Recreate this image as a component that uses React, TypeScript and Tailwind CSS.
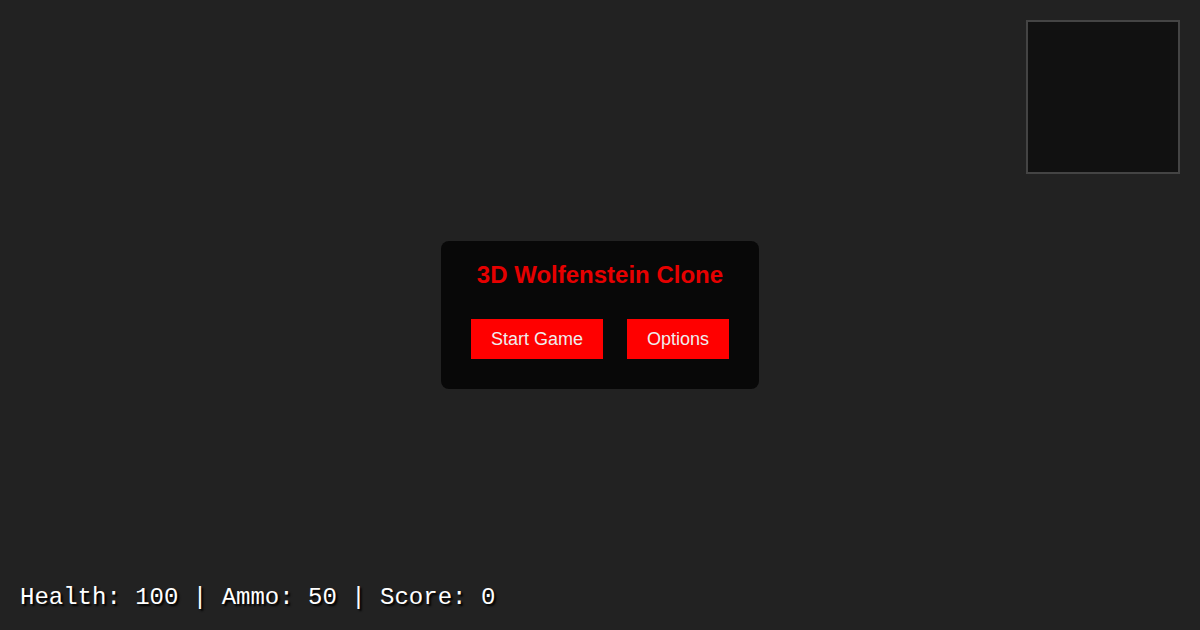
export default function App() {
  return (
    <div className="relative w-[1200px] h-[630px] bg-[#222222] overflow-hidden font-['Liberation_Sans',Arial,sans-serif]">
      {/* Main menu */}
      <div className="flex h-full items-center justify-center">
        <div className="flex flex-col items-center rounded-lg bg-[#080808] p-5">
          <h1 className="mb-5 text-2xl leading-7 font-bold text-[#e60000]">3D Wolfenstein Clone</h1>
          <div className="flex gap-[24px] px-2.5 py-2.5">
            <button className="bg-[#ff0000] px-5 h-10 text-lg text-[#eeeeee]">Start Game</button>
            <button className="bg-[#ff0000] px-5 h-10 text-lg text-[#eeeeee]">Options</button>
          </div>
        </div>
      </div>

      {/* Minimap */}
      <div className="absolute top-5 right-5 w-[154px] h-[154px] border-2 border-[#444444] bg-[#111111]" />

      {/* HUD */}
      <div className="absolute left-5 bottom-[18px] text-2xl leading-7 text-white font-['Liberation_Mono','Courier_New',monospace] [text-shadow:2px_2px_2px_#000]">
        Health: 100 | Ammo: 50 | Score: 0
      </div>
    </div>
  );
}
